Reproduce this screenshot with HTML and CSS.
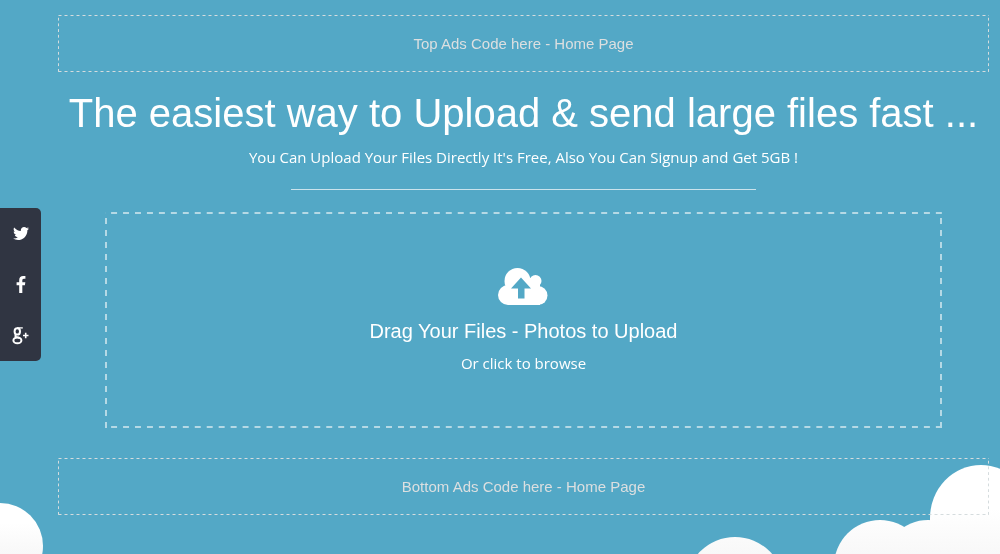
FILE: index.html
```
<!DOCTYPE html>
<html lang="en">
<head>
<meta charset="utf-8">
<meta name="viewport" content="width=device-width, initial-scale=1">
<title>Upload &amp; send large files</title>
<link rel="stylesheet" href="styles.css">
</head>
<body>
<svg class="cloud cloud-left" viewBox="0 0 44 52" width="44" height="52" aria-hidden="true">
  <defs><linearGradient id="shade" gradientUnits="userSpaceOnUse" x1="0" y1="0" x2="0" y2="52"><stop offset="0.4" stop-color="#fff"/><stop offset="1" stop-color="#f8f8f8"/></linearGradient></defs>
  <circle cx="0" cy="44" r="43" fill="url(#shade)"/>
</svg>
<svg class="cloud cloud-right" viewBox="0 0 304 90" width="304" height="90" aria-hidden="true">
  <defs><linearGradient id="haze" gradientUnits="userSpaceOnUse" x1="0" y1="0" x2="0" y2="90"><stop offset="0.5" stop-color="#fff"/><stop offset="1" stop-color="#f8f8f8"/></linearGradient></defs>
  <g fill="url(#haze)">
    <circle cx="39" cy="122" r="49"/>
    <circle cx="184" cy="102" r="46"/>
    <circle cx="232" cy="101" r="45"/>
    <path d="M234 90V54a51 53 0 0 1 102 0V90z"/>
  </g>
</svg>

<nav class="social" aria-label="Social">
  <a href="#twitter" aria-label="Twitter"><svg viewBox="108 256 1576 1280" width="16" height="13"><path d="M1684 408q-67 98-162 167 1 14 1 42 0 130-38 259.500t-115.500 248.500-184.500 210.500-258 146-323 54.500q-271 0-496-145 35 4 78 4 225 0 401-138-105-2-188-64.500t-114-159.500q33 5 61 5 43 0 85-11-112-23-185.500-111.500t-73.500-205.500v-4q68 38 146 41-66-44-105-115t-39-154q0-88 44-163 121 149 294.500 238.500t371.500 99.500q-8-38-8-74 0-134 94.500-228.500t228.500-94.500q140 0 236 102 109-21 205-78-37 115-142 178 93-10 186-50z"/></svg></a>
  <a href="#facebook" aria-label="Facebook"><svg viewBox="479 0 864 1664" width="10" height="17"><path d="M1343 12v264h-157q-86 0-116 36t-30 108v189h293l-39 296h-254v759h-306v-759h-255v-296h255v-218q0-186 104-288.500t277-102.500q147 0 228 12z"/></svg></a>
  <a href="#google-plus" aria-label="Google Plus"><svg viewBox="0 0 17 18" width="17" height="18"><g fill="none" stroke="#fff"><ellipse cx="5.300" cy="4.400" rx="2.700" ry="3.200" stroke-width="2"/><path d="M5 0.900H10.800" stroke-width="1.300"/><path d="M4.200 7.500Q2.200 9.300 4.500 10L7.500 10.900" stroke-width="1.800"/><ellipse cx="5.400" cy="13.400" rx="4" ry="2.900" stroke-width="2"/><path d="M11 8.500H16.500M13.700 5.800V11.200" stroke-width="1.600"/></g></svg></a>
</nav>

<main class="page">
  <aside class="ad">Top Ads Code here - Home Page</aside>
  <header class="intro">
    <h1>The easiest way to Upload &amp; send large files fast ...</h1>
    <p>You Can Upload Your Files Directly It's Free, Also You Can Signup and Get 5GB !</p>
    <hr>
  </header>
  <label class="dropzone">
    <input class="file" type="file" multiple>
    <svg viewBox="0 0 50 37" width="50" height="37" aria-hidden="true">
      <g fill="#fff"><circle cx="10" cy="27" r="10"/><circle cx="19.500" cy="13" r="13"/><circle cx="37.500" cy="13" r="6"/><circle cx="40" cy="27.500" r="9.500"/><path d="M10 37V19L7 14H42V37z"/><path d="M28 10H37V22H28z"/></g>
      <path d="M23 9.500L33 20.500H26.500V30.500H20V20.500H13z" fill="#53a8c6"/>
    </svg>
    <span class="drop-title">Drag Your Files - Photos to Upload</span>
    <span class="drop-hint">Or click to browse</span>
  </label>
  <aside class="ad">Bottom Ads Code here - Home Page</aside>
</main>
</body>
</html>
```
FILE: styles.css
```
* {
  box-sizing: border-box;
}

body {
  margin: 0;
  min-height: 100vh;
  position: relative;
  overflow-x: hidden;
  background: #53a8c6;
  color: #fff;
  font-family: "Liberation Sans", Arial, sans-serif;
}

.cloud {
  position: absolute;
  bottom: 0;
}

.cloud-left {
  left: 0;
}

.cloud-right {
  right: 0;
}

.social {
  position: fixed;
  left: 0;
  top: 208px;
  width: 41px;
  border-radius: 0 5px 5px 0;
  background: #303542;
}

.social a {
  display: flex;
  height: 51px;
  align-items: center;
  justify-content: center;
}

.social svg {
  fill: #fff;
}

.page {
  position: relative;
  display: flex;
  flex-direction: column;
  padding: 15px 11px 39px 58px;
}

/* Dashed frames with an even dash and gap on all four sides */
.ad,
.dropzone {
  --h: linear-gradient(90deg, var(--line) 50%, transparent 50%);
  --v: linear-gradient(var(--line) 50%, transparent 50%);
  background-image: var(--h), var(--h), var(--v), var(--v);
  background-position: top, bottom, left, right;
  background-repeat: round no-repeat, round no-repeat, no-repeat round, no-repeat round;
  background-size: var(--dash) var(--thick), var(--dash) var(--thick), var(--thick) var(--dash), var(--thick) var(--dash);
}

.ad {
  --line: #d5dcde;
  --dash: 6px;
  --thick: 1px;
  display: flex;
  height: 57px;
  align-items: center;
  justify-content: center;
  color: #dcdfe0;
  font-size: 15px;
}

.intro {
  text-align: center;
}

h1 {
  margin: 16px 0 0;
  font-size: 40px;
  font-weight: 400;
  line-height: 50px;
}

.intro p {
  margin: 7px 0 0;
  font: 500 15px/24px "Open Sans", sans-serif;
}

hr {
  width: 50%;
  height: 1px;
  margin: 20px auto 0;
  border: 0;
  background: #cbe3ec;
}

.dropzone {
  --line: #b5d9e5;
  --dash: 12px;
  --thick: 2px;
  position: relative;
  display: flex;
  flex-direction: column;
  align-items: center;
  width: 90%;
  height: 216px;
  margin: 22px auto 30px;
  padding-top: 56px;
  cursor: pointer;
}

.file {
  position: absolute;
  inset: 0;
  width: 100%;
  opacity: 0;
  cursor: pointer;
}

.drop-title {
  margin-top: 14px;
  font-size: 20px;
  line-height: 24px;
}

.drop-hint {
  margin-top: 8px;
  font: 500 15px/24px "Open Sans", sans-serif;
}
```
